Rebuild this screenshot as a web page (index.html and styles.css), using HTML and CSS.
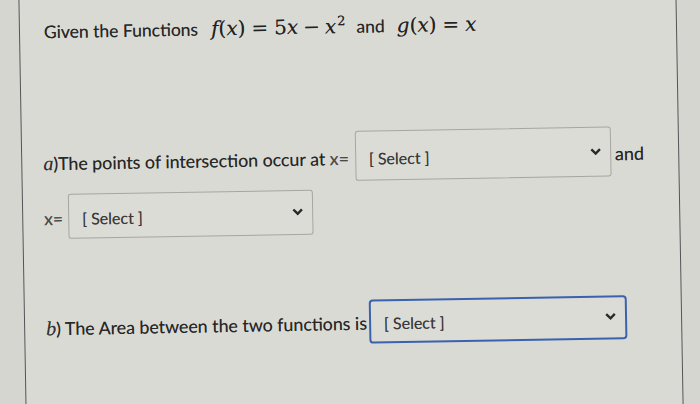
FILE: index.html
```html
<!DOCTYPE html>
<html lang="en">
<head>
    <meta charset="UTF-8" />
    <meta name="viewport" content="width=device-width, initial-scale=1" />
    <title>Quiz Question</title>
    <link rel="stylesheet" href="styles.css">
</head>
<body>
    <div class="photo">
        <div class="sheet">
            <p class="stem">
                <span class="stem-text">Given the Functions</span>
                <span class="math">
                    <i>f</i><span class="mo">(</span><i>x</i><span class="mo">)</span><span class="rel">=</span>5<i>x</i><span class="bin">&minus;</span><i>x</i><sup>2</sup>
                </span>
                <span class="stem-and">and</span>
                <span class="math">
                    <i>g</i><span class="mo">(</span><i>x</i><span class="mo">)</span><span class="rel">=</span><i>x</i>
                </span>
            </p>

            <div class="row row-a">
                <span class="label"><i class="part">a</i>)The points of intersection occur at <span class="eq">x=</span></span>
                <div class="select select-first">
                    <span class="select-text">[ Select ]</span>
                    <svg class="chevron" width="11" height="8" viewBox="0 0 11 8"><path d="M1.2 1.5 L5.5 5.8 L9.8 1.5" fill="none" stroke="#2a2a2a" stroke-width="2.4"/></svg>
                </div>
                <span class="after">and</span>
            </div>

            <div class="row row-x">
                <span class="label eq">x=</span>
                <div class="select select-second">
                    <span class="select-text">[ Select ]</span>
                    <svg class="chevron" width="11" height="8" viewBox="0 0 11 8"><path d="M1.2 1.5 L5.5 5.8 L9.8 1.5" fill="none" stroke="#2a2a2a" stroke-width="2.4"/></svg>
                </div>
            </div>

            <div class="row row-b">
                <span class="label"><i class="part">b</i>) The Area between the two functions is</span>
                <div class="select select-area">
                    <span class="select-text">[ Select ]</span>
                    <svg class="chevron" width="11" height="8" viewBox="0 0 11 8"><path d="M1.2 1.5 L5.5 5.8 L9.8 1.5" fill="none" stroke="#2a2a2a" stroke-width="2.4"/></svg>
                </div>
            </div>
        </div>
    </div>
</body>
</html>
```

FILE: styles.css
```css
html, body {
    margin: 0;
    height: 100%;
    overflow: hidden;
    background-color: #d6d6d0;
}
body {
    font-family: 'Lato', 'Noto Sans', sans-serif;
    color: #262626;
    text-shadow: 0 0 0.6px rgba(0, 0, 0, 0.45);
}
.photo {
    width: 700px;
    height: 404px;
    overflow: hidden;
}
.sheet {
    margin: -30px 20px 0 22px;
    padding: 30px 0 0 21px;
    height: 440px;
    border-left: 1px solid #565456;
    border-right: 1px solid #565456;
    background-color: #d9dad4;
    transform: rotate(-1deg);
    transform-origin: 328px 232px;
}
.stem {
    margin: 0;
    padding: 11px 0 0 3px;
    height: 30px;
    line-height: 30px;
    font-size: 17.5px;
    display: flex;
    align-items: baseline;
}
.stem-text {
    margin-right: 13px;
}
.stem-and {
    margin: 0 12px 0 11px;
}
.math {
    font-family: 'DejaVu Serif', 'Liberation Serif', serif;
    font-size: 20px;
    color: #222;
    white-space: nowrap;
}
.math i {
    font-style: italic;
}
.math .rel {
    margin: 0 6px;
}
.math .bin {
    margin: 0 5px;
}
.math sup {
    font-size: 13px;
    line-height: 0;
    margin-left: 1px;
}
.row {
    display: flex;
    align-items: baseline;
    font-size: 17.8px;
}
.row-a {
    margin-top: 90px;
}
.row-x {
    margin-top: 8px;
}
.row-b {
    margin-top: 66px;
}
.part {
    font-family: 'Liberation Serif', 'DejaVu Serif', serif;
    font-size: 20px;
    color: #333;
}
.eq {
    color: #4a4a4a;
}
.label {
    margin-right: 6px;
}
.row-x .label {
    font-size: 17.5px;
    margin-right: 5px;
}
.row-b .label {
    margin-right: 2px;
}
.after {
    margin-left: 4px;
    font-size: 18px;
}
.select {
    box-sizing: border-box;
    display: flex;
    align-items: center;
    justify-content: space-between;
    height: 45px;
    padding: 4px 9px 0 13px;
    border: 1px solid #a7a7a2;
    border-radius: 3px;
    background-color: #dbdcd6;
}
.select-first {
    width: 256px;
    height: 50px;
    padding-top: 6px;
}
.select-second {
    width: 245px;
}
.select-area {
    width: 258px;
    height: 44px;
    border: 2px solid #3a62ad;
    border-radius: 4px;
    padding-left: 13px;
}
.select-text {
    font-size: 16px;
    line-height: 20px;
    color: #383838;
}
.chevron {
    margin-top: -6px;
}
```
